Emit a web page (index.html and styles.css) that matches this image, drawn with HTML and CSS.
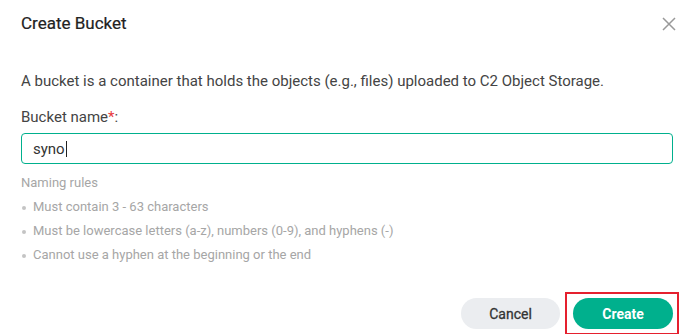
FILE: index.html
```html
<!DOCTYPE html>
<html>
<head>
    <meta charset="UTF-8">
    <title>Create Bucket</title>
    <link rel="stylesheet" href="styles.css">
</head>
<body>
    <div class="dialog">
        <!-- 标题栏 -->
        <div class="dialog-header">
            <h2 class="dialog-title">Create Bucket</h2>
            <span class="close-btn">
                <svg width="14" height="14" viewBox="0 0 14 14">
                    <path d="M1 1 L13 13 M13 1 L1 13" stroke="#999" stroke-width="1.5" fill="none"/>
                </svg>
            </span>
        </div>

        <p class="desc">A bucket is a container that holds the objects (e.g., files) uploaded to C2 Object Storage.</p>

        <!-- 表单 -->
        <label class="field-label">Bucket name<span class="required">*</span>:</label>
        <div class="input-box"><span class="input-text">syno</span><span class="caret"></span></div>

        <div class="rules">
            <div class="rules-title">Naming rules</div>
            <ul class="rules-list">
                <li>Must contain 3 - 63 characters</li>
                <li>Must be lowercase letters (a-z), numbers (0-9), and hyphens (-)</li>
                <li>Cannot use a hyphen at the beginning or the end</li>
            </ul>
        </div>

        <!-- 按钮 -->
        <div class="dialog-footer">
            <button class="btn btn-cancel">Cancel</button>
            <span class="mark"><button class="btn btn-create">Create</button></span>
        </div>
    </div>
</body>
</html>
```

FILE: styles.css
```css
* { margin: 0; padding: 0; box-sizing: border-box; }

body {
    background: #fff;
    font-family: Roboto, "Liberation Sans", sans-serif;
    color: #333;
}

.dialog {
    width: 692px;
    height: 334px;
    padding: 11px 19px 0 21px;
}

/* 标题栏 */
.dialog-header {
    display: flex;
    justify-content: space-between;
    align-items: center;
    height: 24px;
}

.dialog-title {
    font-size: 17px;
    font-weight: 400;
    line-height: 24px;
    color: #222;
    -webkit-text-stroke: 0.2px #222;
}

.close-btn {
    display: flex;
    margin-right: -3px;
    margin-top: 1px;
}

.desc {
    margin-top: 36px;
    font-size: 15px;
    line-height: 20px;
    color: #444;
}

.field-label {
    display: block;
    margin-top: 16px;
    font-size: 15px;
    line-height: 20px;
    color: #444;
}

.required {
    color: #e8383d;
}

.input-box {
    margin-top: 6px;
    height: 31px;
    border: 1px solid #00b08d;
    border-radius: 4px;
    padding: 0 11px;
    display: flex;
    align-items: center;
    font-size: 15px;
    color: #333;
}

.caret {
    display: inline-block;
    width: 1px;
    height: 16px;
    background: #222;
    margin-left: 1px;
}

.rules {
    margin-top: 7px;
    font-size: 13px;
    color: #a6a6a6;
}

.rules-title {
    line-height: 24px;
}

.rules-list {
    list-style: none;
}

.rules-list li {
    line-height: 24px;
    padding-left: 12px;
    position: relative;
}

.rules-list li::before {
    content: "";
    position: absolute;
    left: 1px;
    top: 11px;
    width: 4px;
    height: 4px;
    border-radius: 50%;
    background: #c4c4c4;
}

/* 按钮 */
.dialog-footer {
    margin-top: 25px;
    display: flex;
    justify-content: flex-end;
    align-items: center;
    gap: 5px;
    margin-right: -6px;
}

.btn {
    height: 31px;
    border: none;
    border-radius: 16px;
    font-family: Roboto, "Liberation Sans", sans-serif;
    font-size: 14px;
}

.btn-cancel {
    width: 99px;
    background: #ebedf0;
    color: #333;
    font-weight: 400;
    -webkit-text-stroke: 0.3px #333;
}

.btn-create {
    width: 100px;
    background: #00b08d;
    color: #fff;
    font-weight: 700;
    display: block;
}

.mark {
    border: 2px solid #e5202e;
    padding: 4px 4px 4px 6px;
}
```
